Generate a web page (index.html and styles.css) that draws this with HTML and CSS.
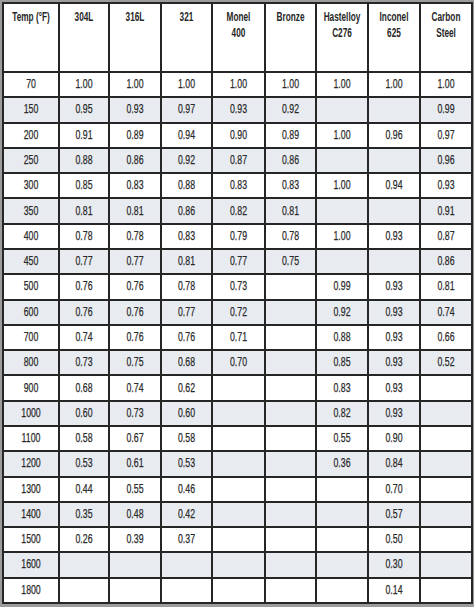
FILE: index.html
```html
<!DOCTYPE html>
<html>
<head>
<meta charset="utf-8">
<link rel="stylesheet" href="styles.css">
</head>
<body>
<table class="chart">
<colgroup>
<col class="c-temp"><col class="c50"><col class="c52"><col class="c51"><col class="c53"><col class="c51"><col class="c52"><col class="c52"><col class="c52">
</colgroup>
<thead>
<tr><th><span>Temp (°F)</span></th><th><span>304L</span></th><th><span>316L</span></th><th><span>321</span></th><th><span>Monel<br>400</span></th><th><span>Bronze</span></th><th><span>Hastelloy<br>C276</span></th><th><span>Inconel<br>625</span></th><th><span>Carbon<br>Steel</span></th></tr>
</thead>
<tbody>
<tr><td><span>70</span></td><td><span>1.00</span></td><td><span>1.00</span></td><td><span>1.00</span></td><td><span>1.00</span></td><td><span>1.00</span></td><td><span>1.00</span></td><td><span>1.00</span></td><td><span>1.00</span></td></tr>
<tr><td><span>150</span></td><td><span>0.95</span></td><td><span>0.93</span></td><td><span>0.97</span></td><td><span>0.93</span></td><td><span>0.92</span></td><td></td><td></td><td><span>0.99</span></td></tr>
<tr><td><span>200</span></td><td><span>0.91</span></td><td><span>0.89</span></td><td><span>0.94</span></td><td><span>0.90</span></td><td><span>0.89</span></td><td><span>1.00</span></td><td><span>0.96</span></td><td><span>0.97</span></td></tr>
<tr><td><span>250</span></td><td><span>0.88</span></td><td><span>0.86</span></td><td><span>0.92</span></td><td><span>0.87</span></td><td><span>0.86</span></td><td></td><td></td><td><span>0.96</span></td></tr>
<tr><td><span>300</span></td><td><span>0.85</span></td><td><span>0.83</span></td><td><span>0.88</span></td><td><span>0.83</span></td><td><span>0.83</span></td><td><span>1.00</span></td><td><span>0.94</span></td><td><span>0.93</span></td></tr>
<tr><td><span>350</span></td><td><span>0.81</span></td><td><span>0.81</span></td><td><span>0.86</span></td><td><span>0.82</span></td><td><span>0.81</span></td><td></td><td></td><td><span>0.91</span></td></tr>
<tr><td><span>400</span></td><td><span>0.78</span></td><td><span>0.78</span></td><td><span>0.83</span></td><td><span>0.79</span></td><td><span>0.78</span></td><td><span>1.00</span></td><td><span>0.93</span></td><td><span>0.87</span></td></tr>
<tr><td><span>450</span></td><td><span>0.77</span></td><td><span>0.77</span></td><td><span>0.81</span></td><td><span>0.77</span></td><td><span>0.75</span></td><td></td><td></td><td><span>0.86</span></td></tr>
<tr><td><span>500</span></td><td><span>0.76</span></td><td><span>0.76</span></td><td><span>0.78</span></td><td><span>0.73</span></td><td></td><td><span>0.99</span></td><td><span>0.93</span></td><td><span>0.81</span></td></tr>
<tr><td><span>600</span></td><td><span>0.76</span></td><td><span>0.76</span></td><td><span>0.77</span></td><td><span>0.72</span></td><td></td><td><span>0.92</span></td><td><span>0.93</span></td><td><span>0.74</span></td></tr>
<tr><td><span>700</span></td><td><span>0.74</span></td><td><span>0.76</span></td><td><span>0.76</span></td><td><span>0.71</span></td><td></td><td><span>0.88</span></td><td><span>0.93</span></td><td><span>0.66</span></td></tr>
<tr><td><span>800</span></td><td><span>0.73</span></td><td><span>0.75</span></td><td><span>0.68</span></td><td><span>0.70</span></td><td></td><td><span>0.85</span></td><td><span>0.93</span></td><td><span>0.52</span></td></tr>
<tr><td><span>900</span></td><td><span>0.68</span></td><td><span>0.74</span></td><td><span>0.62</span></td><td></td><td></td><td><span>0.83</span></td><td><span>0.93</span></td><td></td></tr>
<tr><td><span>1000</span></td><td><span>0.60</span></td><td><span>0.73</span></td><td><span>0.60</span></td><td></td><td></td><td><span>0.82</span></td><td><span>0.93</span></td><td></td></tr>
<tr><td><span>1100</span></td><td><span>0.58</span></td><td><span>0.67</span></td><td><span>0.58</span></td><td></td><td></td><td><span>0.55</span></td><td><span>0.90</span></td><td></td></tr>
<tr><td><span>1200</span></td><td><span>0.53</span></td><td><span>0.61</span></td><td><span>0.53</span></td><td></td><td></td><td><span>0.36</span></td><td><span>0.84</span></td><td></td></tr>
<tr><td><span>1300</span></td><td><span>0.44</span></td><td><span>0.55</span></td><td><span>0.46</span></td><td></td><td></td><td></td><td><span>0.70</span></td><td></td></tr>
<tr><td><span>1400</span></td><td><span>0.35</span></td><td><span>0.48</span></td><td><span>0.42</span></td><td></td><td></td><td></td><td><span>0.57</span></td><td></td></tr>
<tr><td><span>1500</span></td><td><span>0.26</span></td><td><span>0.39</span></td><td><span>0.37</span></td><td></td><td></td><td></td><td><span>0.50</span></td><td></td></tr>
<tr><td><span>1600</span></td><td></td><td></td><td></td><td></td><td></td><td></td><td><span>0.30</span></td><td></td></tr>
<tr><td><span>1800</span></td><td></td><td></td><td></td><td></td><td></td><td></td><td><span>0.14</span></td><td></td></tr>
</tbody>
</table>
</body>
</html>
```
FILE: styles.css
```css
html, body {
  margin: 0;
  padding: 0;
  background: #9c9c9c;
}
body {
  padding: 2px 1px 3px 2px;
  width: 474px;
  height: 607px;
  box-sizing: border-box;
}
.chart {
  border-collapse: collapse;
  table-layout: fixed;
  width: 471px;
  height: 602px;
  background: #fff;
  font-family: "Liberation Sans", Arial, sans-serif;
  color: #2a2a2a;
}
.c-temp { width: 56px; }
.c50 { width: 50px; }
.c51 { width: 51px; }
.c52 { width: 52px; }
.c53 { width: 53px; }
.chart th, .chart td {
  border: 2px solid #262626;
  text-align: center;
  padding: 0;
  white-space: nowrap;
}
.chart span {
  display: block;
  margin: 0 -14px;
  text-align: center;
}
.chart th {
  height: 62px;
  vertical-align: top;
  padding-top: 5px;
  font-weight: bold;
  font-size: 12.5px;
  line-height: 16px;
  color: #262626;
}
.chart th span {
  transform: scaleX(0.66);
}
.chart td {
  height: 22px;
  padding-bottom: 1px;
  font-size: 12.5px;
  vertical-align: middle;
  -webkit-text-stroke: 0.25px #2a2a2a;
}
.chart td span {
  transform: scaleX(0.7);
}
.chart tbody tr:nth-child(even) td {
  background: #e8ecf1;
}
```
